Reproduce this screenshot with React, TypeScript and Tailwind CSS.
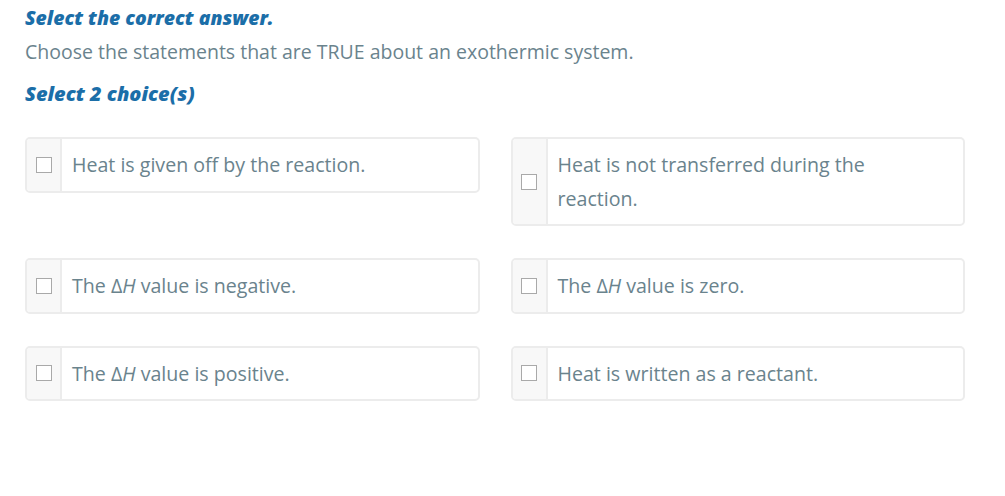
const font = { fontFamily: '"Open Sans", "Noto Sans", sans-serif' };

type Choice = { id: string; content: React.ReactNode };

const DeltaH = () => (
  <>
    Δ<span className="italic">H</span>
  </>
);

const left: Choice[] = [
  { id: "a", content: "Heat is given off by the reaction." },
  { id: "c", content: <>The <DeltaH /> value is negative.</> },
  { id: "e", content: <>The <DeltaH /> value is positive.</> },
];

const right: Choice[] = [
  { id: "b", content: "Heat is not transferred during the reaction." },
  { id: "d", content: <>The <DeltaH /> value is zero.</> },
  { id: "f", content: "Heat is written as a reactant." },
];

const ChoiceCard = ({ choice }: { choice: Choice }) => (
  <label className="flex border-2 border-[#ececec] rounded-[5px] bg-white overflow-hidden cursor-pointer">
    <div className="w-[35px] shrink-0 flex items-center justify-center bg-[#f8f8f8] border-r-2 border-[#ececec]">
      <span className="block w-[16px] h-[16px] border border-[#a9a9a9] bg-white" />
    </div>
    <div className="flex-1 pl-[10px] pr-[60px] py-[9px] text-[19.6px] leading-[33.5px] text-[#6a838d]">
      {choice.content}
    </div>
  </label>
);

const App = () => {
  const rows = left.map((l, i) => [l, right[i]]);
  return (
    <div className="min-h-screen bg-white pl-[25px] pr-[40px] pt-[3px]" style={font}>
      <h2 className="text-[19.4px] leading-[30px] font-extrabold italic text-[#1b6ea8]">
        Select the correct answer.
      </h2>
      <p className="mt-[4px] text-[19.5px] leading-[30px] text-[#6a838d]">
        Choose the statements that are TRUE about an exothermic system.
      </p>
      <p className="mt-[12px] text-[20px] leading-[30px] font-extrabold italic text-[#1b6ea8]">
        Select 2 choice(s)
      </p>
      <div className="mt-[28px] w-[940px] grid grid-cols-2 gap-x-[31px] gap-y-[32px] items-start">
        {rows.flat().map((c) => (
          <ChoiceCard key={c.id} choice={c} />
        ))}
      </div>
    </div>
  );
};

export default App;
